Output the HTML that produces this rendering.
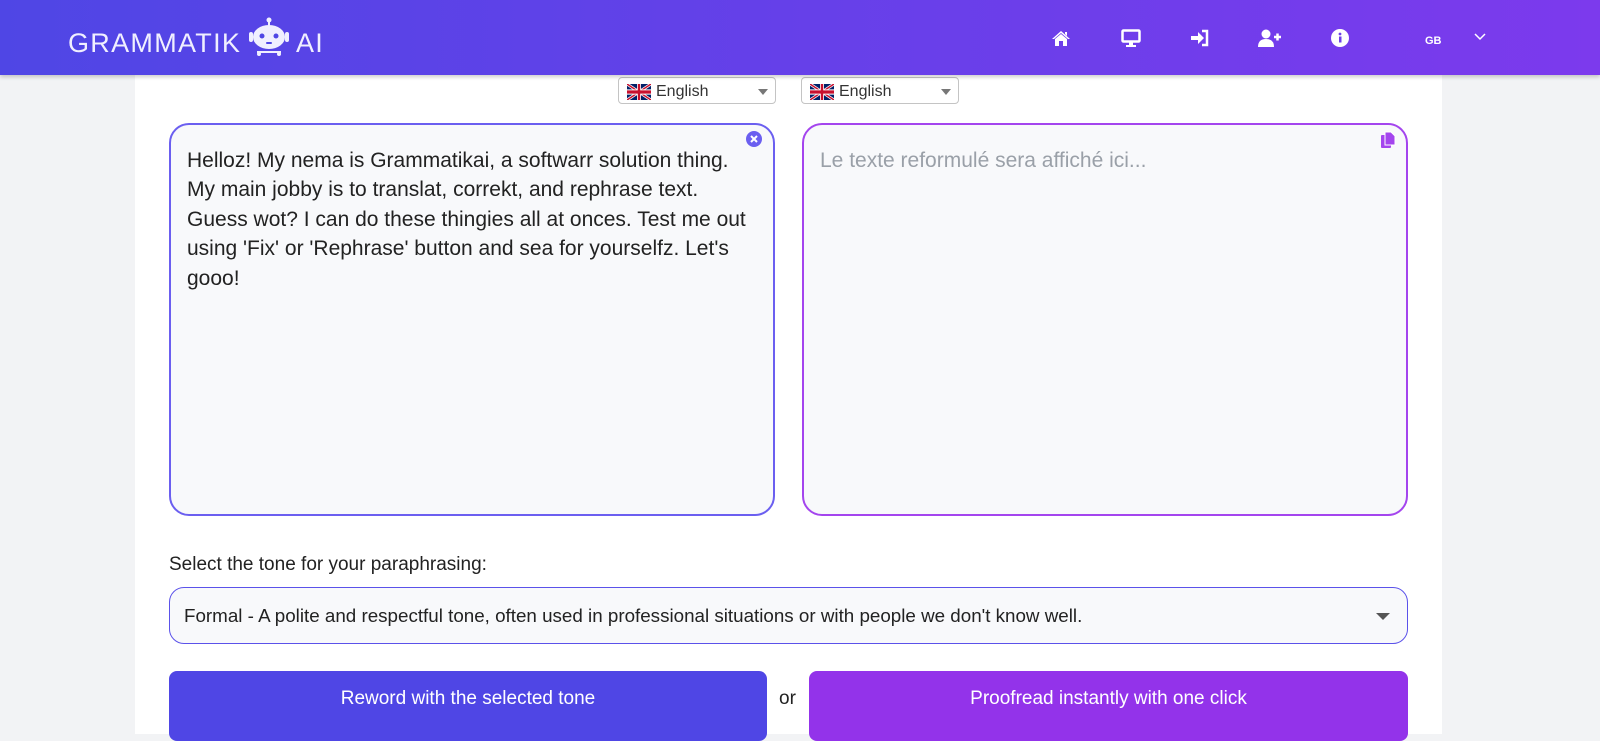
<!DOCTYPE html>
<html><head><meta charset="utf-8"><style>
*{box-sizing:border-box;margin:0;padding:0}
body{width:1600px;height:734px;overflow:hidden;background:#f2f3f5;font-family:"Liberation Sans",sans-serif;position:relative}
.hdr{position:absolute;left:0;top:0;width:1600px;height:75px;background:linear-gradient(90deg,#4f46e5,#7c3aed);box-shadow:0 2px 4px rgba(0,0,0,.2);z-index:2}
.logo{position:absolute;left:68px;top:28px;color:#f0efff;font-size:27px;letter-spacing:1.3px}
.card{position:absolute;left:135px;top:0;width:1307px;height:734px;background:#fff}
.sel{position:absolute;top:77px;width:158px;height:27px;border:1px solid #c4c4c4;border-radius:4px;background:#fff;font-size:16px;color:#333;padding:5px 0 0 37px}
.sel .fl{position:absolute;left:8px;top:6px;width:24px;height:16px}
.sel .ar{position:absolute;right:7px;top:11px;border:5px solid transparent;border-top:6px solid #777}
.ta{position:absolute;top:123px;height:393px;border-radius:20px;background:#f8f9fb;border:2px solid #6b5ff0;padding:21px 16px;font-size:21px;line-height:29.4px;color:#222}
.nav{position:absolute;top:28px;width:20px;height:20px}
.btn{position:absolute;top:671px;height:70px;border-radius:8px;color:#fff;font-size:19px;text-align:center;padding-top:17px}
</style></head><body>
<div class="hdr">
<div class="logo">GRAMMATIK</div>
<div class="logo" style="left:296px">AI</div>
<svg style="position:absolute;left:247px;top:16px" width="44" height="44" viewBox="0 0 44 44"><circle cx="22" cy="4" r="2.5" fill="#f0efff"/><rect x="21" y="4" width="2" height="6" fill="#f0efff"/><ellipse cx="22" cy="21" rx="16" ry="12" fill="#f0efff"/><rect x="2" y="16" width="4" height="10" rx="2" fill="#f0efff"/><rect x="38" y="16" width="4" height="10" rx="2" fill="#f0efff"/><circle cx="15" cy="20" r="2.5" fill="#4f46e5"/><circle cx="29" cy="20" r="2.5" fill="#4f46e5"/><rect x="19" y="26" width="6" height="2" rx="1" fill="#4f46e5"/><rect x="10" y="35" width="24" height="2" fill="#f0efff"/><circle cx="12" cy="38" r="2" fill="#f0efff"/><circle cx="32" cy="38" r="2" fill="#f0efff"/></svg>
<svg class="nav" style="left:1051px" viewBox="0 0 20 20"><path d="M10 3 L1 11 L3 11 L10 5 L17 11 L19 11Z M4 11 L10 6 L16 11 V18 H12 V13 H8 V18 H4Z M14 4 H16 V8 L14 6Z" fill="#fff"/></svg>
<svg class="nav" style="left:1121px" viewBox="0 0 20 20"><rect x="1.5" y="2.5" width="17" height="11" rx="1" fill="none" stroke="#fff" stroke-width="2.5"/><rect x="8" y="14" width="4" height="3" fill="#fff"/><rect x="5" y="17" width="10" height="2" fill="#fff"/></svg>
<svg class="nav" style="left:1190px" viewBox="0 0 20 20"><path d="M1 8 H8 V4 L14 10 L8 16 V12 H1Z" fill="#fff"/><path d="M12 3 H17 V17 H12" fill="none" stroke="#fff" stroke-width="2.5"/></svg>
<svg class="nav" style="left:1258px;width:24px" viewBox="0 0 24 20"><circle cx="8" cy="6" r="4.5" fill="#fff"/><path d="M0 19 Q0 11 8 11 Q16 11 16 19Z" fill="#fff"/><path d="M16 9 H23 M19.5 5.5 V12.5" stroke="#fff" stroke-width="2.5"/></svg>
<svg class="nav" style="left:1330px" viewBox="0 0 20 20"><circle cx="10" cy="10" r="9" fill="#fff"/><rect x="9" y="8.5" width="2.5" height="6" fill="#6d3fe9"/><circle cx="10" cy="6" r="1.4" fill="#6d3fe9"/></svg>
<div style="position:absolute;left:1425px;top:35px;color:#fff;font-size:11px;font-weight:bold">GB</div>
<svg style="position:absolute;left:1474px;top:33px" width="12" height="8" viewBox="0 0 12 8"><path d="M1 1 L6 6 L11 1" fill="none" stroke="#fff" stroke-width="1.5"/></svg>
</div>
<div class="card"></div>
<div class="sel" style="left:618px"><svg class="fl" viewBox="0 0 60 30" preserveAspectRatio="none"><rect width="60" height="30" fill="#012169"/><path d="M0 0L60 30M60 0L0 30" stroke="#fff" stroke-width="6"/><path d="M0 0L60 30M60 0L0 30" stroke="#C8102E" stroke-width="3"/><path d="M30 0V30M0 15H60" stroke="#fff" stroke-width="10"/><path d="M30 0V30M0 15H60" stroke="#C8102E" stroke-width="6"/></svg>English<span class="ar"></span></div>
<div class="sel" style="left:801px"><svg class="fl" viewBox="0 0 60 30" preserveAspectRatio="none"><rect width="60" height="30" fill="#012169"/><path d="M0 0L60 30M60 0L0 30" stroke="#fff" stroke-width="6"/><path d="M0 0L60 30M60 0L0 30" stroke="#C8102E" stroke-width="3"/><path d="M30 0V30M0 15H60" stroke="#fff" stroke-width="10"/><path d="M30 0V30M0 15H60" stroke="#C8102E" stroke-width="6"/></svg>English<span class="ar"></span></div>
<div class="ta" style="left:169px;width:606px">Helloz! My nema is Grammatikai, a softwarr solution thing. My main jobby is to translat, correkt, and rephrase text. Guess wot? I can do these thingies all at onces. Test me out using 'Fix' or 'Rephrase' button and sea for yourselfz. Let's gooo!</div>
<svg style="position:absolute;left:746px;top:131px" width="16" height="16" viewBox="0 0 16 16"><circle cx="8" cy="8" r="8" fill="#6b5ff0"/><path d="M5 5L11 11M11 5L5 11" stroke="#fff" stroke-width="2"/></svg>
<div class="ta" style="left:802px;width:606px;border-color:#a445ee;color:#9aa0a8">Le texte reformulé sera affiché ici...</div>
<svg style="position:absolute;left:1380px;top:131px" width="16" height="18" viewBox="0 0 16 18"><rect x="1" y="4" width="10" height="13" rx="1" fill="#a445ee"/><path d="M5 1 H11 L15 5 V14 H5Z" fill="#a445ee" stroke="#fff" stroke-width="1"/></svg>
<div style="position:absolute;left:169px;top:554px;font-size:19px;color:#222">Select the tone for your paraphrasing:</div>
<div style="position:absolute;left:169px;top:587px;width:1239px;height:57px;border:1.5px solid #5b52ea;border-radius:15px;background:#f8f9fb;font-size:18.8px;color:#222;padding:17px 0 0 14px">Formal - A polite and respectful tone, often used in professional situations or with people we don't know well.<span style="position:absolute;right:17px;top:25px;border:7px solid transparent;border-top:7px solid #555"></span></div>
<div class="btn" style="left:169px;width:598px;background:#4f46e5">Reword with the selected tone</div>
<div style="position:absolute;left:779px;top:688px;font-size:19px;color:#222">or</div>
<div class="btn" style="left:809px;width:599px;background:#9333ea">Proofread instantly with one click</div>
</body></html>
